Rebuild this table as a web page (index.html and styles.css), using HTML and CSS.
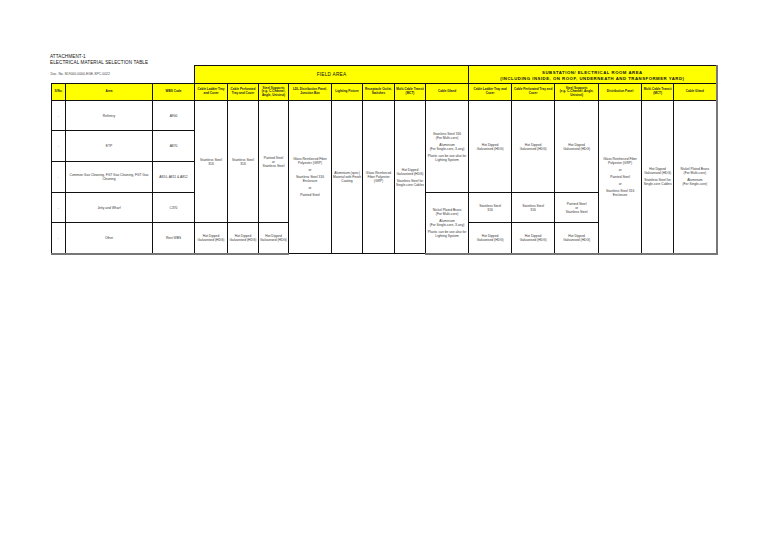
FILE: index.html
```html
<!DOCTYPE html>
<html>
<head>
<meta charset="utf-8">
<link rel="stylesheet" href="styles.css">
</head>
<body>
<div class="page">
  <div class="title">
    <div>ATTACHMENT-1</div>
    <div>ELECTRICAL MATERIAL SELECTION TABLE</div>
  </div>
  <table class="sel">
    <colgroup>
      <col style="width:14px"><col style="width:87px"><col style="width:42px">
      <col style="width:33px"><col style="width:31px"><col style="width:30px">
      <col style="width:43px"><col style="width:31px"><col style="width:32px">
      <col style="width:31px"><col style="width:43px">
      <col style="width:43px"><col style="width:43px"><col style="width:44px">
      <col style="width:43px"><col style="width:32px"><col style="width:43px">
    </colgroup>
    <tr class="r-area">
      <td colspan="3" class="blank"><span class="doc">Doc. No. M-9000-0000-EGE-SPC-0022</span></td>
      <td colspan="8" class="hy area-field">FIELD AREA</td>
      <td colspan="6" class="hy area-sub last">SUBSTATION/ ELECTRICAL ROOM AREA<br>(INCLUDING INSIDE, ON ROOF, UNDERNEATH AND TRANSFORMER YARD)</td>
    </tr>
    <tr class="r-head">
      <td class="hy hd">S/No.</td>
      <td class="hy hd">Area</td>
      <td class="hy hd">WBS Code</td>
      <td class="hy hd">Cable Ladder Tray<br>and Cover</td>
      <td class="hy hd">Cable Perforated<br>Tray and Cover</td>
      <td class="hy hd">Steel Supports<br>(e.g. C-Channel,<br>Angle, Unistrut)</td>
      <td class="hy hd">LDL Distribution Panel,<br>Junction Box</td>
      <td class="hy hd">Lighting Fixture</td>
      <td class="hy hd">Receptacle Outlet,<br>Switches</td>
      <td class="hy hd">Multi-Cable Transit<br>(MCT)</td>
      <td class="hy hd">Cable Gland</td>
      <td class="hy hd">Cable Ladder Tray and<br>Cover</td>
      <td class="hy hd">Cable Perforated Tray and<br>Cover</td>
      <td class="hy hd">Steel Supports<br>(e.g. C-Channel, Angle,<br>Unistrut)</td>
      <td class="hy hd">Distribution Panel</td>
      <td class="hy hd">Multi-Cable Transit<br>(MCT)</td>
      <td class="hy hd last">Cable Gland</td>
    </tr>
    <tr class="r30">
      <td>-</td>
      <td>Refinery</td>
      <td>A900</td>
      <td rowspan="4"><p>Stainless Steel<br>316</p></td>
      <td rowspan="4"><p>Stainless Steel<br>316</p></td>
      <td rowspan="4"><p>Painted Steel<br>or<br>Stainless Steel</p></td>
      <td rowspan="5"><p>Glass Reinforced Fiber<br>Polyester (GRP)</p><p>or</p><p>Stainless Steel 316<br>Enclosure</p><p>or</p><p>Painted Steel</p></td>
      <td rowspan="5"><p>Aluminium (spec)<br>Material with Finish<br>Coating</p></td>
      <td rowspan="5"><p>Glass Reinforced<br>Fiber Polyester<br>(GRP)</p></td>
      <td rowspan="5"><p>Hot Dipped<br>Galvanised (HDG)</p><p>Stainless Steel for<br>Single-core Cables</p></td>
      <td rowspan="3"><p>Stainless Steel 316<br>(For Multi-core)</p><p>Aluminium<br>(For Single-core, 3-any)</p><p>Plastic can be use also for<br>Lighting System</p></td>
      <td rowspan="3"><p>Hot Dipped<br>Galvanised (HDG)</p></td>
      <td rowspan="3"><p>Hot Dipped<br>Galvanised (HDG)</p></td>
      <td rowspan="3"><p>Hot Dipped<br>Galvanised (HDG)</p></td>
      <td rowspan="5" class="bot"><p>Glass Reinforced Fiber<br>Polyester (GRP)</p><p>or</p><p>Painted Steel</p><p>or</p><p>Stainless Steel 316<br>Enclosure</p></td>
      <td rowspan="5" class="bot"><p>Hot Dipped<br>Galvanised (HDG)</p><p>Stainless Steel for<br>Single-core Cables</p></td>
      <td rowspan="5" class="bot last"><p>Nickel Plated Brass<br>(For Multi-core)</p><p>Aluminium<br>(For Single-core)</p></td>
    </tr>
    <tr class="r31">
      <td>-</td>
      <td>ETP</td>
      <td>A870</td>
    </tr>
    <tr class="r31">
      <td>-</td>
      <td>Common Gas Cleaning, FGT Gas Cleaning, FGT Gas<br>Cleaning</td>
      <td>A810, A811 &amp; A812</td>
    </tr>
    <tr class="r30">
      <td>-</td>
      <td>Jetty and Wharf</td>
      <td>C370</td>
      <td rowspan="2" class="bot"><p>Nickel Plated Brass<br>(For Multi-core)</p><p>Aluminium<br>(For Single-core, 3-any)</p><p>Plastic can be use also for<br>Lighting System</p></td>
      <td><p>Stainless Steel<br>316</p></td>
      <td><p>Stainless Steel<br>316</p></td>
      <td><p>Painted Steel<br>or<br>Stainless Steel</p></td>
    </tr>
    <tr class="r31 lastrow">
      <td class="bot">-</td>
      <td class="bot">Other</td>
      <td class="bot">Rest WBS</td>
      <td class="bot"><p>Hot Dipped<br>Galvanised (HDG)</p></td>
      <td class="bot"><p>Hot Dipped<br>Galvanised (HDG)</p></td>
      <td class="bot"><p>Hot Dipped<br>Galvanised (HDG)</p></td>
      <td class="bot"><p>Hot Dipped<br>Galvanised (HDG)</p></td>
      <td class="bot"><p>Hot Dipped<br>Galvanised (HDG)</p></td>
      <td class="bot"><p>Hot Dipped<br>Galvanised (HDG)</p></td>
    </tr>
  </table>
</div>
</body>
</html>
```

FILE: styles.css
```css
html, body {
  margin: 0;
  padding: 0;
  background: #ffffff;
}
body {
  font-family: "Liberation Sans", Arial, sans-serif;
  color: #000;
}
.page {
  padding: 54px 0 0 50px;
  width: 718px;
}
.title {
  font-size: 4.6px;
  line-height: 5.6px;
  letter-spacing: 0.1px;
  height: 11px;
  color: #111;
}
.sel {
  border-collapse: collapse;
  table-layout: fixed;
  width: 665px;
  margin-left: 1px;
}
.sel td {
  border: 1px solid #111;
  padding: 0;
  text-align: center;
  vertical-align: middle;
  font-size: 3.3px;
  line-height: 4px;
  white-space: nowrap;
  overflow: visible;
  color: #333;
}
.sel td p {
  margin: 0 0 3px 0;
}
.sel td p:last-child {
  margin-bottom: 0;
}
.sel td.blank {
  border: none;
  text-align: left;
  padding: 0;
}
.doc {
  display: block;
  margin-left: -1px;
  font-size: 3.4px;
  color: #444;
}
.hy {
  background: #ffff00;
}
.sel td.hd {
  font-weight: bold;
  font-size: 3.1px;
  line-height: 3.6px;
  color: #222;
}
.sel td.area-field {
  font-weight: normal;
  font-size: 4.8px;
  letter-spacing: 0.2px;
  color: #111;
}
.sel td.area-sub {
  font-weight: bold;
  font-size: 4.3px;
  line-height: 6px;
  letter-spacing: 0.5px;
  vertical-align: bottom;
  padding-bottom: 1px;
  color: #111;
}
.r-area { height: 18px; }
.r-head { height: 17px; }
.r30 { height: 30px; }
.r31 { height: 31px; }
.sel td.last {
  border-right: 2px solid #777;
}
.sel td.bot {
  border-bottom: 2px solid #777;
}
```
